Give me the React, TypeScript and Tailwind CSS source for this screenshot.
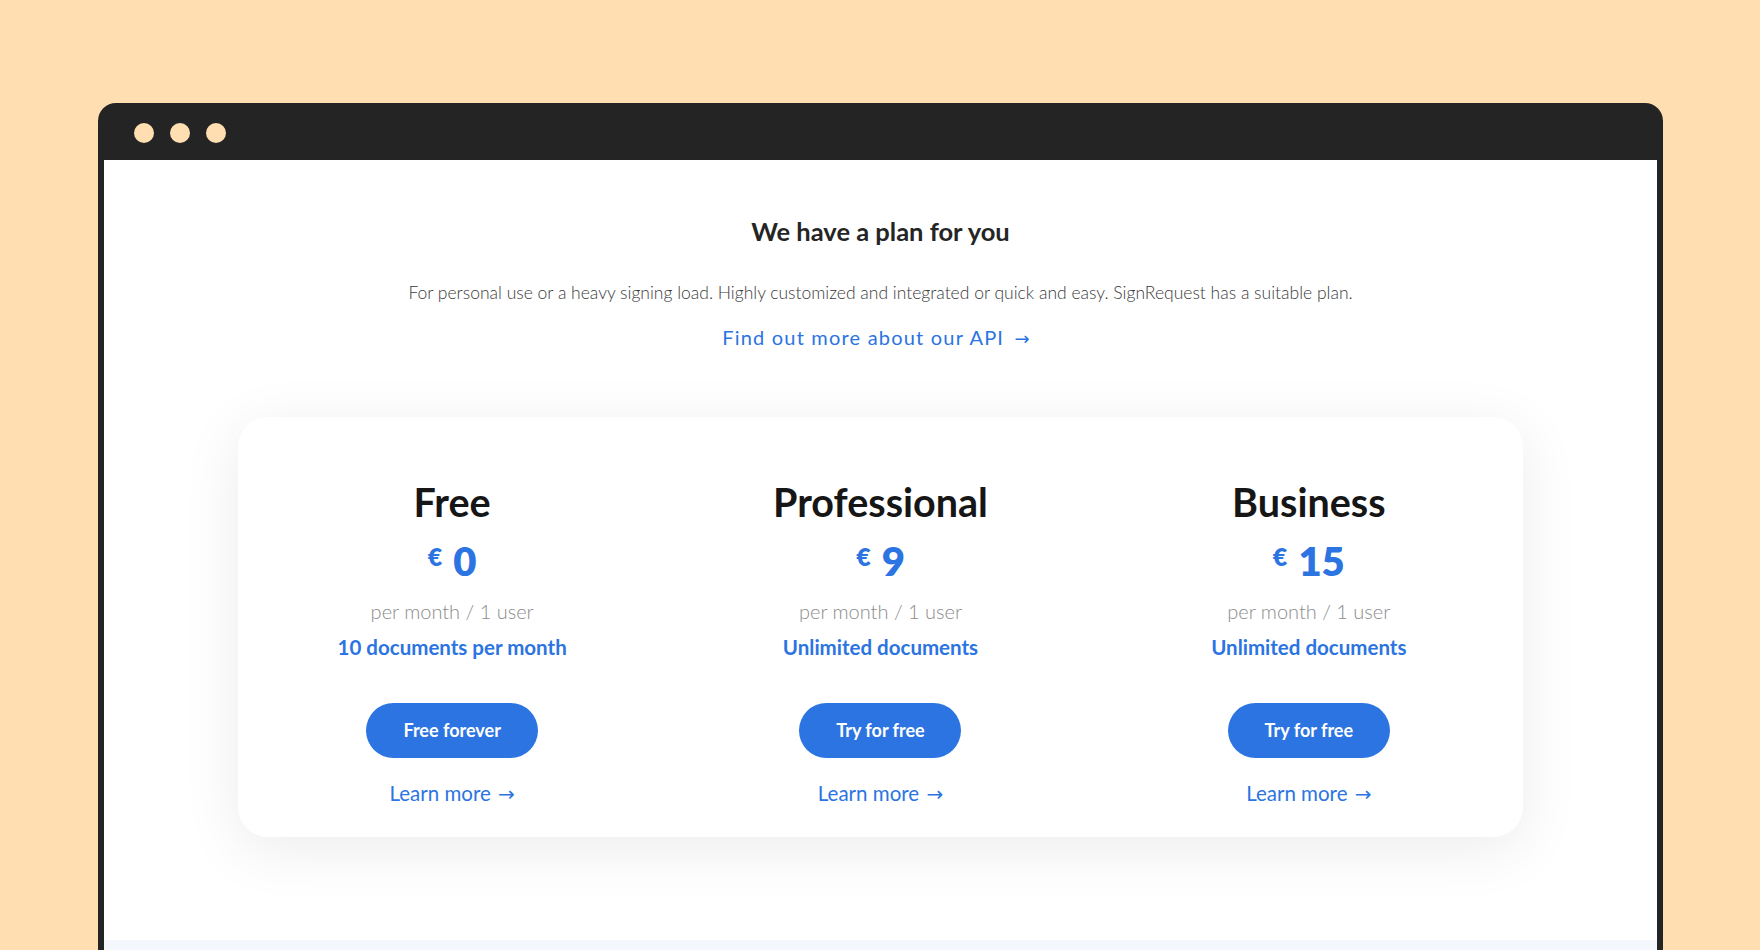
const plans = [
  { name: 'Free', price: '0', docs: '10 documents per month', cta: 'Free forever', ctaWidth: 'w-[172px]' },
  { name: 'Professional', price: '9', docs: 'Unlimited documents', cta: 'Try for free', ctaWidth: 'w-[162px]' },
  { name: 'Business', price: '15', docs: 'Unlimited documents', cta: 'Try for free', ctaWidth: 'w-[162px]' },
];

function PlanColumn({ plan }: { plan: (typeof plans)[number] }) {
  return (
    <div className="flex flex-col items-center">
      <h3 className="text-[39.5px] leading-[46px] font-bold text-[#161616]">{plan.name}</h3>
      <div className="mt-[12px] flex items-start h-[48px] text-[#2b74e1] font-extrabold">
        <span className="text-[25px] leading-[25px] mt-[7px] mr-[11px]">€</span>
        <span className="text-[40px] leading-[48px]">{plan.price}</span>
      </div>
      <p className="mt-[13px] text-[20px] leading-[26px] font-light text-[#8c8c8c]">per month / 1 user</p>
      <p className="mt-[10px] text-[20.5px] leading-[26px] font-bold text-[#2b74e1]">{plan.docs}</p>
      <button
        className={`mt-[43px] h-[55px] ${plan.ctaWidth} rounded-full bg-[#2b74e1] text-white text-[18px] font-bold`}
      >
        {plan.cta}
      </button>
      <a className="mt-[22px] text-[20.5px] leading-[26px] text-[#2b74e1]" href="#">
        Learn more <span className="font-['DejaVu_Sans',sans-serif] text-[20px] ml-[2px]">→</span>
      </a>
    </div>
  );
}

export default function App() {
  return (
    <div className="h-[950px] overflow-hidden bg-[#ffdfb1] pt-[103px] font-['Lato',sans-serif]">
      <div className="ml-[98px] w-[1565px] h-[900px] rounded-t-[18px] bg-[#242424] px-[6px] flex flex-col">
        {/* title bar */}
        <div className="h-[57px] shrink-0 flex items-center gap-4 pl-[30px] pt-[3px]">
          <span className="w-5 h-5 rounded-full bg-[#ffdfb1]" />
          <span className="w-5 h-5 rounded-full bg-[#ffdfb1]" />
          <span className="w-5 h-5 rounded-full bg-[#ffdfb1]" />
        </div>

        <div className="flex-1 bg-white flex flex-col items-center">
          <h1 className="mt-[54px] text-[25.5px] leading-[34px] font-bold text-[#252525]">We have a plan for you</h1>
          <p className="mt-[33px] text-[17.5px] leading-[24px] font-light text-[#3a3a3a]">
            For personal use or a heavy signing load. Highly customized and integrated or quick and easy. SignRequest has a suitable plan.
          </p>
          <a href="#" className="mt-[18px] mr-[8px] text-[20px] leading-[28px] tracking-[1.2px] text-[#2b74e1]">
            Find out more about our API <span className="font-['DejaVu_Sans',sans-serif] text-[18px] ml-1">→</span>
          </a>

          <div className="mt-[64px] w-[1285px] rounded-[30px] bg-white shadow-[0_12px_60px_rgba(0,0,0,0.08)] grid grid-cols-3 pt-[62px] pb-[30px]">
            {plans.map((plan) => (
              <PlanColumn key={plan.name} plan={plan} />
            ))}
          </div>

          <div className="mt-[103px] self-stretch flex-1 bg-[#f5f7fe]" />
        </div>
      </div>
    </div>
  );
}
